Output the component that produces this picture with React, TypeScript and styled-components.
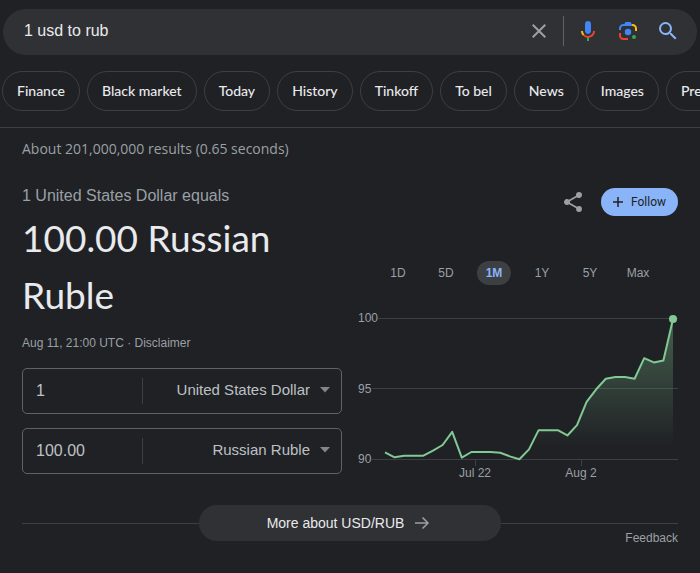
import React from "react";
import styled, { createGlobalStyle } from "styled-components";

const GlobalStyle = createGlobalStyle`
  *, *::before, *::after { box-sizing: border-box; }
  body {
    margin: 0;
    background: #202124;
    color: #e8eaed;
    font-family: "Liberation Sans", Arial, sans-serif;
    font-size: 14px;
    overflow-x: hidden;
  }
  button, input, select { font: inherit; color: inherit; }
  button { cursor: pointer; }
`;

const displayFont = `Lato, "Open Sans", sans-serif`;

const Page = styled.div`
  display: flex;
  flex-direction: column;
`;

const SearchBar = styled.form`
  display: flex;
  align-items: center;
  height: 46px;
  margin: 9px 3px 0;
  padding: 0 17px 2px 21px;
  border-radius: 23px;
  background: #303134;
`;

const SearchInput = styled.input`
  flex: 1;
  min-width: 0;
  padding: 0;
  border: 0;
  outline: 0;
  background: transparent;
  font-size: 16px;
  line-height: 24px;
`;

const IconButton = styled.button`
  display: inline-flex;
  align-items: center;
  justify-content: center;
  padding: 0;
  border: 0;
  background: transparent;
  color: #9aa0a6;
`;

const SearchDivider = styled.span`
  width: 1px;
  height: 30px;
  margin: 0 12px;
  background: #5f6368;
`;

const SearchTools = styled.div`
  display: flex;
  gap: 16px;
`;

const Chips = styled.nav`
  display: flex;
  gap: 7px;
  padding: 16px 0 16px 2px;
  border-bottom: 1px solid #3c4043;
  overflow: hidden;
`;

const Chip = styled.a`
  flex: none;
  height: 40px;
  padding: 0 14px;
  border: 1px solid #3c4043;
  border-radius: 20px;
  color: #e8eaed;
  font-family: ${displayFont};
  font-size: 14px;
  font-weight: 500;
  line-height: 38px;
  text-decoration: none;
  white-space: nowrap;
`;

const Stats = styled.p`
  margin: 0;
  padding: 11px 22px 0;
  color: #9aa0a6;
  font-family: "Open Sans", sans-serif;
  font-size: 14px;
  line-height: 20px;
`;

const Converter = styled.main`
  display: grid;
  grid-template-columns: 1fr 1fr;
  gap: 16px;
  padding: 27px 22px 0;
`;

const Column = styled.section`
  display: flex;
  flex-direction: column;
  min-width: 0;
`;

const Equals = styled.div`
  color: #9aa0a6;
  font-size: 16px;
  line-height: 20px;
`;

const Result = styled.h1`
  margin: 3px 0 10px;
  font-family: ${displayFont};
  font-size: 37px;
  font-weight: 400;
  line-height: 57px;
`;

const Meta = styled.div`
  margin-bottom: 15px;
  color: #9aa0a6;
  font-size: 12px;
  line-height: 20px;
`;

const QuietLink = styled.a`
  color: inherit;
  text-decoration: none;
`;

const AmountBox = styled.div`
  display: flex;
  align-items: center;
  height: 46px;
  margin-bottom: 14px;
  padding: 0 11px 0 13px;
  border: 1px solid #5f6368;
  border-radius: 5px;
  color: #bdc1c6;
`;

const AmountInput = styled.input`
  width: 107px;
  height: 26px;
  padding: 0;
  border: 0;
  border-right: 1px solid #3c4043;
  border-radius: 0;
  outline: 0;
  background: transparent;
  font-size: 16px;
`;

const CurrencyField = styled.div`
  display: flex;
  flex: 1;
  align-items: center;
  gap: 10px;
  min-width: 0;
  padding-bottom: 2px;
  color: #80868b;
`;

const CurrencySelect = styled.select`
  flex: 1;
  min-width: 0;
  padding: 0 0 2px;
  border: 0;
  outline: 0;
  appearance: none;
  background: transparent;
  color: #bdc1c6;
  font-size: 15px;
  text-align: right;
  text-align-last: right;
`;

const Actions = styled.div`
  display: flex;
  align-items: center;
  justify-content: flex-end;
  gap: 16px;
  margin-top: 2px;
`;

const FollowButton = styled.button`
  display: inline-flex;
  align-items: center;
  gap: 7px;
  height: 28px;
  padding: 0 12px 0 11px;
  border: 0;
  border-radius: 14px;
  background: #8ab4f8;
  color: #202124;
  font-family: Roboto, sans-serif;
  font-size: 12px;
`;

const Ranges = styled.div`
  display: grid;
  grid-template-columns: repeat(6, 48px);
  justify-content: center;
  justify-items: center;
  margin: 45px 0 15px;
`;

const Range = styled.button<{ $active: boolean }>`
  height: 24px;
  padding: 0 9px;
  border: 0;
  border-radius: 12px;
  background: ${(p) => (p.$active ? "#3c4043" : "transparent")};
  color: ${(p) => (p.$active ? "#8ab4f8" : "#9aa0a6")};
  font-size: 12px;
  font-weight: ${(p) => (p.$active ? 700 : 400)};
`;

const Chart = styled.svg`
  display: block;
  width: 100%;
  height: auto;
  overflow: visible;
`;

const AxisText = styled.text`
  fill: #9aa0a6;
  font-size: 12px;
`;

const Footer = styled.footer`
  display: flex;
  flex-direction: column;
  padding: 17px 22px 24px;
`;

const MoreRow = styled.div`
  display: flex;
  align-items: center;

  &::before,
  &::after {
    content: "";
    flex: 1;
    height: 1px;
    background: #3c4043;
  }
`;

const MoreLink = styled.a`
  display: flex;
  align-items: center;
  justify-content: center;
  gap: 10px;
  width: 46%;
  height: 36px;
  padding-right: 3px;
  border-radius: 18px;
  background: #303134;
  color: #e8eaed;
  font-size: 14px;
  text-decoration: none;
`;

const Feedback = styled(QuietLink)`
  align-self: flex-end;
  margin-top: -11px;
  color: #9aa0a6;
  font-size: 12px;
  line-height: 16px;
`;

const chips = ["Finance", "Black market", "Today", "History", "Tinkoff", "To bel", "News", "Images", "President"];
const ranges = ["1D", "5D", "1M", "1Y", "5Y", "Max"];
const currencies = ["United States Dollar", "Russian Ruble"];
const rates = [
  90.47, 90.12, 90.24, 90.24, 90.24, 90.6, 91, 91.94, 90.1, 90.5, 90.5, 90.5, 90.45, 90.19, 89.98, 90.69,
  92.06, 92.06, 92.06, 91.68, 92.42, 94.08, 94.98, 95.73, 95.85, 95.85, 95.73, 97.2, 96.9, 97.04, 100,
];

const xOf = (i: number) => 27 + (i * 288) / (rates.length - 1);
const yOf = (rate: number) => 159 - (rate - 90) * 14;

function RateChart() {
  const line = rates.map((r, i) => `${xOf(i)},${yOf(r)}`).join(" ");
  return (
    <Chart viewBox="0 0 320 180" role="img" aria-label="USD to RUB over one month">
      <defs>
        <linearGradient id="area" x1="0" y1="0" x2="0" y2="1">
          <stop offset="0" stopColor="#81c995" stopOpacity="0.38" />
          <stop offset="0.9" stopColor="#81c995" stopOpacity="0" />
        </linearGradient>
      </defs>
      <g stroke="#3c4043">
        <path d="M20 18.5H320M14 88.5H320M14 159.5H320M117.5 159v7M223.5 159v7" />
      </g>
      <AxisText x="0" y="22">100</AxisText>
      <AxisText x="0" y="93">95</AxisText>
      <AxisText x="0" y="163">90</AxisText>
      <AxisText x="117" y="177" textAnchor="middle">Jul 22</AxisText>
      <AxisText x="223" y="177" textAnchor="middle">Aug 2</AxisText>
      <polygon points={`27,159 ${line} 315,159`} fill="url(#area)" />
      <polyline points={line} fill="none" stroke="#81c995" strokeWidth="2" strokeLinejoin="round" />
      <circle cx="315" cy="19" r="4" fill="#81c995" />
    </Chart>
  );
}

function Amount({ label, amount, currency }: { label: string; amount: string; currency: string }) {
  return (
    <AmountBox>
      <AmountInput aria-label={`${label} amount`} defaultValue={amount} />
      <CurrencyField>
        <CurrencySelect aria-label={`${label} currency`} defaultValue={currency}>
          {currencies.map((c) => (
            <option key={c}>{c}</option>
          ))}
        </CurrencySelect>
        <svg width="10" height="6" viewBox="0 0 10 6" fill="currentColor" aria-hidden="true">
          <path d="M0 0h10L5 5.5z" />
        </svg>
      </CurrencyField>
    </AmountBox>
  );
}

export default function App() {
  const [range, setRange] = React.useState("1M");
  return (
    <Page>
      <GlobalStyle />
      <SearchBar role="search" onSubmit={(e) => e.preventDefault()}>
        <SearchInput aria-label="Search" defaultValue="1 usd to rub" />
        <IconButton type="button" aria-label="Clear">
          <svg width="24" height="24" viewBox="0 0 24 24" fill="currentColor">
            <path d="M19 6.41 17.59 5 12 10.59 6.41 5 5 6.41 10.59 12 5 17.59 6.41 19 12 13.41 17.59 19 19 17.59 13.41 12z" />
          </svg>
        </IconButton>
        <SearchDivider />
        <SearchTools>
          <IconButton type="button" aria-label="Search by voice">
            <svg width="24" height="24" viewBox="0 0 24 24">
              <path fill="#4285f4" d="M12 15c1.66 0 3-1.31 3-2.97V4.96C15 3.3 13.66 2 12 2S9 3.3 9 4.96v7.07C9 13.69 10.34 15 12 15z" />
              <path fill="#34a853" d="M11 18.08h2V22h-2z" />
              <path fill="#fbbc04" d="M7.05 16.87C5.78 15.62 5 13.87 5 12h2c0 1.34.56 2.52 1.47 3.41v.02z" />
              <path fill="#ea4335" d="M12 16.93c-1.38 0-2.63-.57-3.54-1.5l-1.41 1.44A6.98 6.98 0 0 0 12 18.92c3.87 0 7-3.1 7-6.92h-2c0 2.72-2.24 4.93-5 4.93z" />
            </svg>
          </IconButton>
          <IconButton type="button" aria-label="Search by image">
            <svg width="24" height="24" viewBox="0 0 24 24" fill="none" strokeWidth="2">
              <path stroke="#4285f4" d="M4 11V9.5A3.5 3.5 0 0 1 7.5 6H16" />
              <path fill="#4285f4" d="M8 5.5 9.5 3h5L16 5.5z" />
              <path stroke="#fbbc04" d="M16 6h.5A3.5 3.5 0 0 1 20 9.5V12" />
              <path stroke="#ea4335" d="M4 14v2.5A3.5 3.5 0 0 0 7.5 20H12" />
              <circle cx="12" cy="13" r="3.2" fill="#4285f4" />
              <circle cx="18" cy="18" r="2" fill="#34a853" />
            </svg>
          </IconButton>
          <IconButton type="submit" aria-label="Search">
            <svg width="24" height="24" viewBox="0 0 24 24" fill="#8ab4f8">
              <path d="M15.5 14h-.79l-.28-.27A6.47 6.47 0 0 0 16 9.5 6.5 6.5 0 1 0 9.5 16c1.61 0 3.09-.59 4.23-1.57l.27.28v.79l5 4.99L20.49 19zm-6 0C7.01 14 5 11.99 5 9.5S7.01 5 9.5 5 14 7.01 14 9.5 11.99 14 9.5 14z" />
            </svg>
          </IconButton>
        </SearchTools>
      </SearchBar>

      <Chips aria-label="Related searches">
        {chips.map((c) => (
          <Chip key={c} href="#">{c}</Chip>
        ))}
      </Chips>

      <Stats>About 201,000,000 results (0.65 seconds)</Stats>

      <Converter>
        <Column>
          <Equals>1 United States Dollar equals</Equals>
          <Result>100.00 Russian Ruble</Result>
          <Meta>
            Aug 11, 21:00 UTC · <QuietLink href="#">Disclaimer</QuietLink>
          </Meta>
          <Amount label="From" amount="1" currency="United States Dollar" />
          <Amount label="To" amount="100.00" currency="Russian Ruble" />
        </Column>
        <Column>
          <Actions>
            <IconButton type="button" aria-label="Share">
              <svg width="24" height="24" viewBox="0 0 24 24" fill="currentColor">
                <path d="M18 16.08c-.76 0-1.44.3-1.96.77L8.91 12.7c.05-.23.09-.46.09-.7s-.04-.47-.09-.7l7.05-4.11A2.99 2.99 0 0 0 21 5a3 3 0 1 0-6 0c0 .24.04.47.09.7L8.04 9.81A3 3 0 1 0 6 15c.79 0 1.5-.31 2.04-.81l7.12 4.16c-.05.21-.08.43-.08.65A2.92 2.92 0 1 0 18 16.08z" />
              </svg>
            </IconButton>
            <FollowButton type="button">
              <svg width="12" height="12" viewBox="0 0 12 12" stroke="currentColor" strokeWidth="1.5" aria-hidden="true">
                <path d="M6 1v10M1 6h10" />
              </svg>
              Follow
            </FollowButton>
          </Actions>
          <Ranges>
            {ranges.map((r) => (
              <Range key={r} type="button" $active={r === range} aria-pressed={r === range} onClick={() => setRange(r)}>
                {r}
              </Range>
            ))}
          </Ranges>
          <RateChart />
        </Column>
      </Converter>

      <Footer>
        <MoreRow>
          <MoreLink href="#">
            More about USD/RUB
            <svg width="16" height="16" viewBox="0 0 16 16" fill="none" stroke="#9aa0a6" strokeWidth="1.5" aria-hidden="true">
              <path d="M1 8h13M8.5 2.5 14 8l-5.5 5.5" />
            </svg>
          </MoreLink>
        </MoreRow>
        <Feedback href="#">Feedback</Feedback>
      </Footer>
    </Page>
  );
}
